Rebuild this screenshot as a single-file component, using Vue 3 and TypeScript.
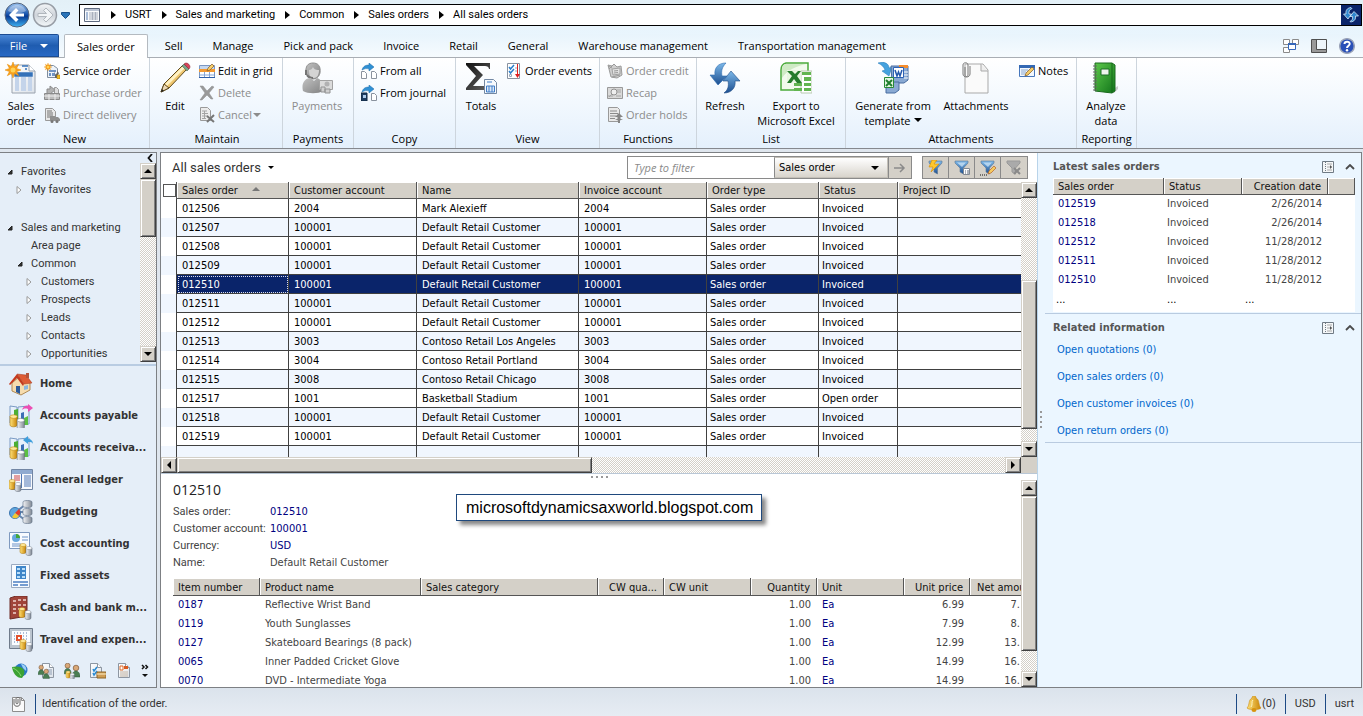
<script setup lang="ts">
import { ref } from 'vue'

interface SmallAction { icon: string; label: string; off?: boolean; menu?: boolean }
interface LargeAction { icon: string; lines: string[]; width: string; off?: boolean; menu?: boolean }
interface RibbonGroup { name: string; cls: string; large: LargeAction[]; small: SmallAction[] }

const crumbs = ['USRT', 'Sales and marketing', 'Common', 'Sales orders', 'All sales orders']
const tabs = ['Sell', 'Manage', 'Pick and pack', 'Invoice', 'Retail', 'General', 'Warehouse management', 'Transportation management']

const groups: RibbonGroup[] = [
  { name: 'New', cls: 'g-new', large: [{ icon: 'neworder', lines: ['Sales', 'order'], width: 'w42' }],
    small: [{ icon: 'service', label: 'Service order' }, { icon: 'purchase', label: 'Purchase order', off: true }, { icon: 'delivery', label: 'Direct delivery', off: true }] },
  { name: 'Maintain', cls: 'g-maintain', large: [{ icon: 'pencil', lines: ['Edit'], width: 'w46' }],
    small: [{ icon: 'editgrid', label: 'Edit in grid' }, { icon: 'delete', label: 'Delete', off: true }, { icon: 'cancel', label: 'Cancel', off: true, menu: true }] },
  { name: 'Payments', cls: 'g-payments', large: [{ icon: 'payments', lines: ['Payments'], width: 'w68', off: true }], small: [] },
  { name: 'Copy', cls: 'g-copy', large: [], small: [{ icon: 'fromall', label: 'From all' }, { icon: 'fromjournal', label: 'From journal' }] },
  { name: 'View', cls: 'g-view', large: [{ icon: 'totals', lines: ['Totals'], width: 'w46' }], small: [{ icon: 'events', label: 'Order events' }] },
  { name: 'Functions', cls: 'g-functions', large: [],
    small: [{ icon: 'credit', label: 'Order credit', off: true }, { icon: 'recap', label: 'Recap', off: true }, { icon: 'holds', label: 'Order holds', off: true }] },
  { name: 'List', cls: 'g-list', large: [{ icon: 'refresh', lines: ['Refresh'], width: 'w56' }, { icon: 'excel', lines: ['Export to', 'Microsoft Excel'], width: 'w86' }], small: [] },
  { name: 'Attachments', cls: 'g-attach', large: [{ icon: 'generate', lines: ['Generate from', 'template'], width: 'w94', menu: true }, { icon: 'attachment', lines: ['Attachments'], width: 'w72' }],
    small: [{ icon: 'notes', label: 'Notes' }] },
  { name: 'Reporting', cls: 'g-report', large: [{ icon: 'book', lines: ['Analyze', 'data'], width: 'w58' }], small: [] },
]

const tree = [
  { label: 'Favorites', level: 0, mark: 'open' },
  { label: 'My favorites', level: 1, mark: 'closed' },
  { label: 'Sales and marketing', level: 0, mark: 'open', gap: true },
  { label: 'Area page', level: 1, mark: '' },
  { label: 'Common', level: 1, mark: 'open' },
  { label: 'Customers', level: 2, mark: 'closed' },
  { label: 'Prospects', level: 2, mark: 'closed' },
  { label: 'Leads', level: 2, mark: 'closed' },
  { label: 'Contacts', level: 2, mark: 'closed' },
  { label: 'Opportunities', level: 2, mark: 'closed' },
]

const modules = [
  { icon: 'home', label: 'Home' },
  { icon: 'payable', label: 'Accounts payable' },
  { icon: 'receivable', label: 'Accounts receiva...' },
  { icon: 'ledger', label: 'General ledger' },
  { icon: 'budget', label: 'Budgeting' },
  { icon: 'cost', label: 'Cost accounting' },
  { icon: 'assets', label: 'Fixed assets' },
  { icon: 'bank', label: 'Cash and bank m...' },
  { icon: 'travel', label: 'Travel and expen...' },
]
const shortcuts = ['globe', 'peoplepage', 'peoplecoins', 'checkbox', 'cardpage']

const headers = ['Customer account', 'Name', 'Invoice account', 'Order type', 'Status', 'Project ID']
const drc = 'Default Retail Customer'
const orders = ([
  ['012506', '2004', 'Mark Alexieff'], ['012507', '100001', drc], ['012508', '100001', drc], ['012509', '100001', drc],
  ['012510', '100001', drc], ['012511', '100001', drc], ['012512', '100001', drc], ['012513', '3003', 'Contoso Retail Los Angeles'],
  ['012514', '3004', 'Contoso Retail Portland'], ['012515', '3008', 'Contoso Retail Chicago'], ['012517', '1001', 'Basketball Stadium'],
  ['012518', '100001', drc], ['012519', '100001', drc],
] as string[][]).map(([id, account, name]) => ({ id, account, name, status: id === '012517' ? 'Open order' : 'Invoiced' }))
const selected = ref('012510')

const lines = [
  ['0187', 'Reflective Wrist Band', '6.99', '7.'],
  ['0119', 'Youth Sunglasses', '7.99', '8.'],
  ['0127', 'Skateboard Bearings (8 pack)', '12.99', '13.'],
  ['0065', 'Inner Padded Cricket Glove', '14.99', '16.'],
  ['0070', 'DVD - Intermediate Yoga', '14.99', '16.'],
]
const latest = [
  ['012519', '2/26/2014'], ['012518', '2/26/2014'], ['012512', '11/28/2012'], ['012511', '11/28/2012'], ['012510', '11/28/2012'],
]
const related = ['Open quotations (0)', 'Open sales orders (0)', 'Open customer invoices (0)', 'Open return orders (0)']
const filterText = ref('')
const filterIcons = ['funnelbolt', 'funnelgrid', 'funneledit', 'funnelclear']
</script>

<template>
  <div class="app">
    <svg class="defs" aria-hidden="true">
      <defs>
        <linearGradient id="orb" x1="0" y1="0" x2="0" y2="1"><stop offset="0" stop-color="#9cc4f0" /><stop offset=".45" stop-color="#1c58b0" /><stop offset=".55" stop-color="#073a94" /><stop offset="1" stop-color="#3fb4f4" /></linearGradient>
        <linearGradient id="orbg" x1="0" y1="0" x2="0" y2="1"><stop offset="0" stop-color="#f4f6f8" /><stop offset=".5" stop-color="#cfd4da" /><stop offset="1" stop-color="#f4f8fa" /></linearGradient>
        <linearGradient id="blue" x1="0" y1="0" x2="0" y2="1"><stop offset="0" stop-color="#7db9ea" /><stop offset="1" stop-color="#1b4e90" /></linearGradient>
        <linearGradient id="page" x1="0" y1="0" x2="1" y2="1"><stop offset="0" stop-color="#fff" /><stop offset="1" stop-color="#dde3ea" /></linearGradient>
        <linearGradient id="gold" x1="0" y1="0" x2="1" y2="0"><stop offset="0" stop-color="#ffe27a" /><stop offset="1" stop-color="#c98405" /></linearGradient>
        <linearGradient id="silver" x1="0" y1="0" x2="1" y2="0"><stop offset="0" stop-color="#f4f5f7" /><stop offset="1" stop-color="#7f8894" /></linearGradient>
        <linearGradient id="green" x1="0" y1="0" x2="1" y2="1"><stop offset="0" stop-color="#5cc84a" /><stop offset="1" stop-color="#11741a" /></linearGradient>
        <linearGradient id="grey" x1="0" y1="0" x2="1" y2="1"><stop offset="0" stop-color="#bdbdbd" /><stop offset="1" stop-color="#757575" /></linearGradient>
        <linearGradient id="dark" x1="0" y1="0" x2="1" y2="1"><stop offset="0" stop-color="#111" /><stop offset="1" stop-color="#666" /></linearGradient>
        <g id="star"><path d="M8 0l1.600 4.400L13.700 2.300 11.600 6.400 16 8l-4.400 1.600 2.100 4.100-4.100-2.100L8 16l-1.600-4.400-4.100 2.100 2.100-4.100L0 8l4.400-1.600-2.100-4.100 4.100 2.100z" fill="#f9a11b" stroke="#e58a06" stroke-width=".5" /><circle cx="8" cy="8" r="2.500" fill="#ffd257" /></g>
        <g id="coins"><path d="M0 3v7c0 2 6 2 6 0V3z" fill="url(#gold)" stroke="#a8750a" stroke-width=".5" /><ellipse cx="3" cy="3" rx="3" ry="1.500" fill="#ffe99a" stroke="#b98512" stroke-width=".5" /><path d="M6 6v6c0 2 6 2 6 0V6z" fill="url(#silver)" stroke="#626b78" stroke-width=".5" /><ellipse cx="9" cy="6" rx="3" ry="1.500" fill="#fff" stroke="#7b8490" stroke-width=".5" /></g>
        <g id="sheet"><path d="M.5.500h7l4 4v10h-11z" fill="url(#page)" stroke="#8d96a2" /><path d="M7.500.500v4h4" fill="#fff" stroke="#8d96a2" /></g>
        <g id="funnel"><path d="M1 1h13v2L9.500 8v6l-3.500-2V8L1 3z" fill="url(#blue)" stroke="#5c7690" stroke-width=".6" /><path d="M3 2.500h9L8 7z" fill="#d4eaf9" opacity=".7" /></g>
        <g id="person"><circle cx="4" cy="3" r="2.800" fill="#d9a878" stroke="#6c4526" stroke-width=".6" /><path d="M0 12c0-8 8-8 8 0z" fill="#4a7e53" stroke="#2c5435" stroke-width=".5" /></g>
        <g id="chart"><path d="M1 2l7 1v17l-7-1zM9 3l11-1v18l-11 1z" fill="#e8f1fb" stroke="#7b9bc4" /><path d="M12 9l3-1v8h-3z" fill="#3c6fb5" /><path d="M5 6l4-1v11H5z" fill="#4cae35" /><path d="M15 14l4-2v9h-4z" fill="#5cc043" /></g>
      </defs>

      <symbol id="neworder" viewBox="0 0 32 32"><path d="M7 3h17l6 6v22H7z" fill="url(#page)" stroke="#9aa2ad" /><path d="M24 3v6h6" fill="#fff" stroke="#9aa2ad" /><path d="M17 4h6M20 7h2M10 11h17v3H10z" stroke="#3572b9" fill="#3572b9" stroke-width="1.500" /><path d="M10 15h4v14h-4zM16 15h5v14h-5zM23 15h4v14h-4z" fill="#c4d4ea" /><use href="#star" /></symbol>
      <symbol id="service" viewBox="0 0 16 16"><path d="M3.500 2.500h6l4 3v9h-10z" fill="#edf3fa" stroke="#808d9d" /><path d="M5 7h7v2H5zM5 10h2v3H5zM8 10h3v3H8z" fill="#6f94c4" /><use href="#star" transform="scale(.5)" /><path d="M10 8v2l1.500 1.500L13 10V8l2 2-1 2v3h-3v-3z" fill="#666" /><path d="M13 12h3v4h-3z" fill="#f3bd21" stroke="#a57709" stroke-width=".5" /></symbol>
      <symbol id="purchase" viewBox="0 0 16 16"><path d="M3 9V4h3V1l5 4-5 4z" fill="#b2b2b2" stroke="#8b8b8b" /><path d="M10.500 2.500h2l2 2v5h-4z" fill="#ddd" stroke="#999" /><path d="M.500 8.500h15v6H.5z" fill="#bcbcbc" stroke="#8a8a8a" /><path d="M0 11h16M5 9v6M11 9v6" stroke="#eee" /></symbol>
      <symbol id="delivery" viewBox="0 0 16 16"><path d="M1.500 1.500h7l3 3v9h-10z" fill="#e8e8e8" stroke="#999" /><path d="M3 4h5M3 6h6M3 8h6M3 10h4" stroke="#999" stroke-width="1.400" /><path d="M6 9h5v5H6zM11 10h3l2 2v2h-5z" fill="#909090" /><circle cx="8" cy="14.500" r="1.500" fill="#777" /><circle cx="13" cy="14.500" r="1.500" fill="#777" /></symbol>
      <symbol id="pencil" viewBox="0 0 32 32"><path d="M2 30l3-8L24 3l4 4L10 26z" fill="#efc66e" stroke="#5f4a1d" /><path d="M6 22L24 4l2 2L8 24z" fill="#fff2c4" /><path d="M2 30l3-8 5 4z" fill="#edd9b5" stroke="#5f4a1d" /><path d="M2 30l1-3 2 2z" fill="#222" /><path d="M23 4l2-2 5 5-2 2z" fill="#79a188" stroke="#49624f" stroke-width=".6" /><path d="M25 2c3-3 8 2 5 5z" fill="#d9455a" stroke="#8a2332" stroke-width=".6" /></symbol>
      <symbol id="editgrid" viewBox="0 0 16 16"><path d="M.5 2.500h15v12H.5z" fill="#fff" stroke="#7b97c2" /><path d="M1 3h14v3H1z" fill="#c5d7ef" /><path d="M0 6h16v3H0z" fill="#f39a32" /><path d="M1 12h14M5.500 9v5M10.500 9v5" stroke="#86a6d6" /><path d="M8 8l1-3 4-4 2 2-4 4z" fill="#f6cf6a" stroke="#80562a" stroke-width=".7" /><path d="M0 14.500h16" stroke="#2e5ea8" /></symbol>
      <symbol id="delete" viewBox="0 0 16 16"><path d="M1 1h3l4 5 5-5 2 1-5 6 4 6h-2L8 10l-5 5H1l5-7z" fill="#9a9a9a" stroke="#8c8c8c" stroke-width=".5" /></symbol>
      <symbol id="cancel" viewBox="0 0 16 16"><path d="M1.500.500h7l3 3v10h-10z" fill="#ececec" stroke="#9a9a9a" /><path d="M3 4h5M3 6.500h6M3 9h6M3 11.500h4M5.500 4v8" stroke="#a3a3a3" /><path d="M8 9l7 6M15 8l-7 7" stroke="#777" stroke-width="2" /></symbol>
      <symbol id="payments" viewBox="0 0 32 32"><path d="M5 12C4 4 7 1 12 1s8 3 7 10c-1 4-4 6-7 6s-5-2-6-5z" fill="url(#grey)" stroke="#858585" /><path d="M8 8c0 5 1 8 5 8 3 0 5-3 5-8-4 0-5-1-6-3-1 2-2 3-4 3z" fill="#d0d0d0" /><path d="M5 8v5M6 13c1 2 3 3 6 3" stroke="#666" stroke-width="2" fill="none" /><path d="M2 29c-2-8 2-13 8-13l3 3 3-3c4 1 7 6 6 13-5 3-15 3-20 0z" fill="url(#grey)" /><path d="M18.500 18.500h13v9h-13z" fill="#d8d8d8" stroke="#999" /><circle cx="26" cy="22" r="2.500" fill="#aaa" /><path d="M20 25h4v5h-4zM24 27h5v4h-5z" fill="#ccc" stroke="#888" /></symbol>
      <symbol id="fromall" viewBox="0 0 16 16"><path d="M.500 8.500h3l2 2v5h-5zM10.500 8.500h3l2 2v5h-5z" fill="#fff" stroke="#8a929e" /><path d="M1 7c1-4 4-5 7-5V0l5 4-5 4V6C5 5 3 6 1 7z" fill="#2f90d4" stroke="#1c69a5" stroke-width=".5" /></symbol>
      <symbol id="fromjournal" viewBox="0 0 16 16"><path d="M0 8h6v8H0z" fill="#1f3e63" stroke="#112640" /><path d="M2 10h3v3H2z" fill="#aecbea" /><path d="M10.500 8.500h3l2 2v5h-5z" fill="#fff" stroke="#8a929e" /><path d="M1 7c1-4 4-5 7-5V0l5 4-5 4V6C5 5 3 6 1 7z" fill="#2f90d4" stroke="#1c69a5" stroke-width=".5" /></symbol>
      <symbol id="totals" viewBox="0 0 32 32"><path d="M1 1h24v6h-1c0-2-2-3-4-3H9l9 9-10 11h12c2 0 4-1 5-3v7H1v-2l10-12L1 3z" fill="url(#dark)" /><path d="M19.500 17.500h9l3 3v11h-12z" fill="#f7fafd" stroke="#7388a3" /><path d="M22 20h5M21.500 24h8v6h-8zM24 24v6M27 24v6" stroke="#3e7cc8" fill="#dbe8f7" /></symbol>
      <symbol id="events" viewBox="0 0 16 16"><path d="M1.500.500h12v15h-12z" fill="#fff" stroke="#8892a0" /><path d="M3 4l1.500 2L8 2M3 8l1.500 2L8 6" stroke="#2a7fcc" stroke-width="1.500" fill="none" /><path d="M3.500 11.500h2v2h-2zM9 5h3M9 8h3" fill="none" stroke="#97a7bb" /><path d="M11 1h1v10h2l-2.500 4L9 11h2z" fill="#e02020" /></symbol>
      <symbol id="credit" viewBox="0 0 16 16"><path d="M1 2l4 1 2-2 3 3 4-1 1 9-5 3-6-1z" fill="#cfcfcf" stroke="#9b9b9b" /><path d="M1 3l4 2M2 6l5-5M5 14l8-2" stroke="#999" /><path d="M5 6l8-1v6l-7 1z" fill="#e2e2e2" stroke="#a1a1a1" /><path d="M7 8l4-.500M7 10l4-.500" stroke="#999" /></symbol>
      <symbol id="recap" viewBox="0 0 16 16"><path d="M.500 2.500h15v11H.5z" fill="#d9d9d9" stroke="#999" /><circle cx="7" cy="7" r="3" fill="#eee" stroke="#919191" /><path d="M5 9l-3 3M10 5h4M10 7h4M1 11h5M9 11h5" stroke="#a5a5a5" /></symbol>
      <symbol id="holds" viewBox="0 0 16 16"><path d="M1.500.500h9l2 2v12h-11z" fill="#e9e9e9" stroke="#999" /><path d="M3 4h7M3 6.500h8M3 9h6M3 11.500h5" stroke="#8b8b8b" /><path d="M12 6l4 4h-2.500v2H16l-3 1.500V16h-2v-2.500L8 12h2.500v-2H8z" fill="#868686" /></symbol>
      <symbol id="refresh" viewBox="0 0 32 32"><path d="M17 1C9 1 5 6 6 13H1l8 10 9-9h-5C12 9 13 5 17 1z" fill="url(#blue)" stroke="#2c6cb0" stroke-width=".6" /><path d="M15 31c8 0 12-6 11-12h5L22 9l-8 10h5c1 5 0 9-4 12z" fill="url(#blue)" stroke="#1d4a84" stroke-width=".6" /></symbol>
      <symbol id="excel" viewBox="0 0 32 32"><path d="M6 1h22v27H1V8c0-4 1-6 5-7z" fill="#f2faed" stroke="#4bab3b" stroke-width="1.500" /><path d="M2 9c0-5 1-7 4-7h20C17 4 7 8 2 16z" fill="#cfeac5" /><path d="M21 9h11v22H21z" fill="#fff" stroke="#b8c9b0" /><path d="M22 10h9v3h-9zM24 15h7v4h-7zM24 21h7v3h-7zM24 26h7v3h-7zM14 21h8v3h-8zM14 26h8v3h-8z" fill="#62b550" /><path d="M7 8h14v12H7z" fill="#e8f6e0" /><path d="M7 9h5l3 3 3-3h3l-4 5 5 7h-5l-3-4-3 4H7l5-7z" fill="#247c2b" /></symbol>
      <symbol id="generate" viewBox="0 0 32 32"><path d="M1 1c7-2 11 1 11 5l3-1-3 9-7-5 3-1C7 5 5 3 1 1z" fill="#45a2de" stroke="#2279b8" stroke-width=".5" /><path d="M14 4h17v14l-4 3H15z" fill="#89a9d3" stroke="#496da0" /><path d="M22 3h9v3h-9z" fill="#f58d2c" /><path d="M27 10h4M27 13h4M27 16h4" stroke="#fff" /><path d="M16.500 5.500h10v10h-10z" fill="#fff" stroke="#2e62b4" /><path d="M18 8l2 6 1.500-4 1.500 4 2-6" stroke="#2458ac" stroke-width="1.500" fill="none" /><path d="M9 20h13v8l-4 3H9z" fill="#89a9d3" stroke="#496da0" /><path d="M7.500 15.500h9v10h-9z" fill="#e5f5e1" stroke="#278936" /><path d="M9 18l6 6M15 18l-6 6" stroke="#1f7f2e" stroke-width="2" /></symbol>
      <symbol id="attachment" viewBox="0 0 32 32"><path d="M5 2h18l5 6v23H5z" fill="#fafafa" stroke="#a9a9a9" /><path d="M21 2v7h7" fill="#eee" stroke="#a9a9a9" /><path d="M5 5v8c0 2 3 2 3 0V3c0-3-5-3-5 0v9c0 4 7 4 7 0V4" fill="none" stroke="#777" /></symbol>
      <symbol id="notes" viewBox="0 0 16 16"><path d="M.500 2.500h15v11H.5z" fill="#f2f7fd" stroke="#4777bc" /><path d="M0 2h16v3H0z" fill="#3368b4" /><path d="M2 7h7M2 9h5M2 11h4" stroke="#8aa8d0" /><path d="M6 13l1-3 6-6 2 2-6 6z" fill="#f5cb65" stroke="#7b5828" stroke-width=".7" /></symbol>
      <symbol id="book" viewBox="0 0 32 32"><path d="M20 29l8-5v3l-4 4z" fill="#aaa" opacity=".6" /><path d="M5 1h17l3 2v26l-3 2L5 29z" fill="url(#green)" stroke="#1b6b1f" /><path d="M22 1v30" stroke="#186a1c" /><path d="M11 7h8v6h-8z" fill="#eef4ec" stroke="#1c6e25" /><path d="M3 4h4M3 7h4M3 10h4M3 13h4M3 16h4M3 19h4M3 22h4M3 25h4M3 28h4" stroke="#666" /></symbol>

      <symbol id="windows" viewBox="0 0 16 16"><path d="M.500 1.500h6v5h-6zM9.500 1.500h6v5h-6zM.500 9.500h6v5h-6z" fill="#fff" stroke="#8a8a8a" /><path d="M5.500 5.500h7v6h-7z" fill="#fff" stroke="#3567ba" /><path d="M5 5h8v2H5z" fill="#3567ba" /></symbol>
      <symbol id="layout" viewBox="0 0 16 16"><path d="M.500 1.500h15v13H.5z" fill="#eef5fa" stroke="#4f4f4f" /><path d="M1 2h4v12H1zM5 11h10v3H5z" fill="#999" /><path d="M5.500 2v9.500H15" fill="none" stroke="#4f4f4f" /></symbol>
      <symbol id="help" viewBox="0 0 16 16"><circle cx="8" cy="8" r="7.300" fill="#2950b8" stroke="#9aa3b8" stroke-width="1.500" /><path d="M5.500 6C5.500 3 11 3 10.700 6 10.500 8 8 8 8 10" stroke="#fff" stroke-width="2" fill="none" /><circle cx="8" cy="12.300" r="1.200" fill="#fff" /></symbol>
      <symbol id="listpage" viewBox="0 0 16 16"><path d="M.500 1.500h15v13H.5z" fill="#f8fafc" stroke="#5f6b80" /><path d="M1 2h14v2H1z" fill="#bcc5d4" /><path d="M2 6h2M2 8h2M2 10h2M2 12h2" stroke="#5c80b4" /><path d="M5 6h9M5 8h9M5 10h9M5 12h9M8.500 5v8M11.500 5v8" stroke="#a9b0bd" /></symbol>

      <symbol id="home" viewBox="0 0 24 24"><path d="M3 11l7-6 11 4v9l-9 5-9-4z" fill="#f6dcae" stroke="#b08a54" /><path d="M0 12l8-10 7 10-1 2-6-8-7 7z" fill="#c53a1e" /><path d="M8 2l9 1 6 8-8 1z" fill="#df5c35" stroke="#a1371d" stroke-width=".5" /><path d="M17 1h3v5h-3z" fill="#b4543a" /><path d="M7 14h4v8l-4-2z" fill="#2d5a98" /><path d="M15 14l4-1v4l-4 1z" fill="#8bb6df" /></symbol>
      <symbol id="payable" viewBox="0 0 24 24"><use href="#chart" /><path d="M13 6c1-4 4-5 6-4V0l5 4-5 4V5c-3-1-5 0-6 1z" fill="#ec4fb4" /><use href="#coins" transform="translate(1 9) scale(1.200)" /></symbol>
      <symbol id="receivable" viewBox="0 0 24 24"><use href="#chart" /><path d="M24 8c0-3-2-5-5-5V0l-5 4 5 4V6c3 0 4 0 5 2z" fill="#3f9fdc" /><use href="#coins" transform="translate(1 9) scale(1.200)" /></symbol>
      <symbol id="ledger" viewBox="0 0 24 24"><path d="M2.500 1.500h21v20h-21z" fill="#f7f9fc" stroke="#7286a4" /><path d="M3 2h20v4H3z" fill="#8faad0" /><path d="M5 8h6M5 10h6M5 12h6" stroke="#d04545" /><path d="M15 8h7M15 10h7M15 12h7M15 14h7M15 16h7M15 18h7M12.500 6v14" stroke="#4f77b5" /><use href="#coins" transform="translate(0 10)" /></symbol>
      <symbol id="budget" viewBox="0 0 24 24"><path d="M8 11l8-6M8 12h8M8 14l8 6" stroke="#6684ab" stroke-width="2" /><circle cx="6" cy="13" r="5.500" fill="#5fa6de" stroke="#3b75ae" /><path d="M6 13l4-4c2 3 1 5 0 7z" fill="#e33e2b" /><path d="M6 13l4 3c-2 3-5 3-7 1z" fill="#f3c833" /><g fill="url(#silver)" stroke="#69788e" stroke-width=".7"><path d="M14 2v4c0 2 9 2 9 0V2c0-2-9-2-9 0zM14 10v4c0 2 9 2 9 0v-4c0-2-9-2-9 0zM14 18v4c0 2 9 2 9 0v-4c0-2-9-2-9 0z" /></g></symbol>
      <symbol id="cost" viewBox="0 0 24 24"><path d="M.500.500h20v16H.5z" fill="#f8fbff" stroke="#7e99bf" /><circle cx="7" cy="6" r="4" fill="#66a7dd" /><path d="M7 6V2c3 0 4 2 4 4z" fill="#42a636" /><path d="M13 5h6M13 8h6M3 12h9M3 14h9" stroke="#6d93c7" /><use href="#coins" transform="translate(11 10)" /></symbol>
      <symbol id="assets" viewBox="0 0 24 24"><path d="M2.500.500h18v23h-18z" fill="#f8fbff" stroke="#9aaac1" /><path d="M7 2h10v13H7z" fill="#3f86c9" /><path d="M8 4h3v2H8zM13 4h3v2h-3zM8 8h3v2H8zM13 8h3v2h-3zM8 12h3v2H8zM13 12h3v2h-3z" fill="#b9defa" /><path d="M4 18h15M4 21h5M11 21h8" stroke="#4b7fc2" stroke-width="1.500" /></symbol>
      <symbol id="bank" viewBox="0 0 24 24"><path d="M1 2l6-2h11v20l-17 3z" fill="#a0443a" stroke="#6f2c26" /><path d="M4 4h3v2H4zM9 3h3v2H9zM14 3h3v2h-3zM4 8h3v2H4zM9 8h3v2H9zM14 8h3v2h-3zM4 12h3v2H4zM9 12h3v2H9zM4 16h3v2H4z" fill="#dcb1aa" /><use href="#coins" transform="translate(10 10)" /></symbol>
      <symbol id="travel" viewBox="0 0 24 24"><path d="M.500.500h23v20H.5z" fill="#bcc5cf" stroke="#6f7b8b" /><path d="M3 3h18v14H3z" fill="#fafcff" /><path d="M5 5h15M5 8h15M5 11h15M5 14h8" stroke="#5f7fae" stroke-dasharray="1 2" /><path d="M8 8h4v4H8z" fill="none" stroke="#e2532f" stroke-width="2" /><use href="#coins" transform="translate(11 10)" /></symbol>

      <symbol id="globe" viewBox="0 0 16 16"><circle cx="9" cy="7" r="6.500" fill="#2b77c9" /><path d="M9 1c4 0 6 4 5 7l-3-3z" fill="#9cd0f4" /><path d="M0 4c4-1 10-1 12 3 1 3 0 5-2 8C4 15 1 10 0 4z" fill="#3ba234" /><path d="M1 5c4 2 6 4 8 8" stroke="#8bdc72" fill="none" /></symbol>
      <symbol id="peoplepage" viewBox="0 0 16 16"><use href="#sheet" transform="translate(4 0)" /><path d="M8 7h6M8 9h6M8 11h6" stroke="#8b9bb1" /><use href="#person" transform="translate(0 2) scale(.8)" /><use href="#person" transform="translate(5 6) scale(.8)" /></symbol>
      <symbol id="peoplecoins" viewBox="0 0 16 16"><use href="#person" transform="scale(.9)" /><use href="#person" transform="translate(8 2)" /><use href="#coins" transform="translate(2 7) scale(.7)" /></symbol>
      <symbol id="checkbox" viewBox="0 0 16 16"><use href="#sheet" /><path d="M3 6l1 2 3-4M3 10l1 2 3-4" stroke="#2a8bd4" fill="none" stroke-width="1.500" /><path d="M7 9h9v6H7z" fill="#cf9d55" stroke="#8e6427" /><path d="M7 11h9" stroke="#fff0c7" /></symbol>
      <symbol id="cardpage" viewBox="0 0 16 16"><use href="#sheet" transform="translate(2 0)" /><path d="M4 3h3v4H4z" fill="#fff" stroke="#df6a2b" /><path d="M8 3h4v3H8z" fill="#d85a20" /><path d="M4 9h8M4 11h8M4 13h8" stroke="#c8b7a4" /></symbol>

      <symbol id="funnelbolt" viewBox="0 0 16 16"><use href="#funnel" /><path d="M4 0h5L6 4h5l-8 8 2-5H1z" fill="#ffc72d" stroke="#d48a00" stroke-width=".6" /></symbol>
      <symbol id="funnelgrid" viewBox="0 0 16 16"><use href="#funnel" /><path d="M9.500 8.500h6v6h-6z" fill="#fff" stroke="#818993" /><path d="M11 11h1M13 11h2M11 13h1M13 13h2" stroke="#5b6776" /></symbol>
      <symbol id="funneledit" viewBox="0 0 16 16"><use href="#funnel" /><path d="M8 14l1-3 5-5 2 2-5 5z" fill="#f5ca60" stroke="#b3602a" stroke-width=".7" /><path d="M0 15h8" stroke="#111" stroke-dasharray="1 1" /></symbol>
      <symbol id="funnelclear" viewBox="0 0 16 16"><path d="M1 1h13v2L9.500 8v6L6 12V8L1 3z" fill="#aaa" stroke="#999" /><path d="M8 8l6 6M14 8l-6 6" stroke="#8a8a8a" stroke-width="2" /></symbol>
      <symbol id="bell" viewBox="0 0 16 16"><path d="M1 12c3-3 1-8 5-10 0-3 4-3 4 0 4 2 2 7 5 10-1 2-13 2-14 0z" fill="url(#gold)" stroke="#c78a10" stroke-width=".6" /><ellipse cx="8" cy="14" rx="2.500" ry="2" fill="#d8930d" /><path d="M5 11c2-2 0-6 2-7" stroke="#fff6c4" fill="none" /></symbol>
      <symbol id="clip" viewBox="0 0 16 16"><path d="M2.500 1.500h9l3 3v11h-12z" fill="#fafafa" stroke="#8d8d8d" /><path d="M11.500 1.500v3h3" fill="none" stroke="#8d8d8d" /><path d="M4 3v5c0 3 6 3 6 0V3c0-2-4-2-4 0v4c0 1 2 1 2 0V3" fill="none" stroke="#666" /></symbol>
      <symbol id="card" viewBox="0 0 12 12"><path d="M.500.500h11v11H.5z" fill="#f5f7f8" stroke="#707b85" /><path d="M3.500 1v10" stroke="#707b85" stroke-dasharray="1 1" /><path d="M5 3h5M5 6h5M5 9h5" stroke="#aaa" /><path d="M8 4l2 2-2 2z" fill="#555" /></symbol>
    </svg>

    <header class="address">
      <button class="orb" aria-label="Back"><svg viewBox="0 0 26 26"><circle cx="13" cy="13" r="12" fill="url(#orb)" stroke="#56657c" /><path d="M4 9c3-8 15-8 18 0-6 3-12 3-18 0z" fill="#fff" opacity=".35" /><path d="M12 6l2.500 2.500-3 3H20v3h-8.500l3 3L12 20l-7-7z" fill="#fff" /></svg></button>
      <button class="orb" aria-label="Forward"><svg viewBox="0 0 26 26"><circle cx="13" cy="13" r="11.500" fill="url(#orbg)" stroke="#979da5" stroke-width="1.500" /><path d="M14 6l-2.500 2.500 3 3H6v3h8.500l-3 3L14 20l7-7z" fill="#f2f5f7" stroke="#b1b7bd" /></svg></button>
      <button class="recent" aria-label="Recent pages"><svg viewBox="0 0 9 7"><path d="M.500.500h8v2l-4 4-4-4z" fill="#2a74b8" stroke="#19518a" /></svg></button>
      <nav class="crumbs" aria-label="Address">
        <svg class="i18"><use href="#listpage" /></svg>
        <template v-for="c in crumbs" :key="c"><i class="sep"></i><a href="#">{{ c }}</a></template>
        <button class="go" aria-label="Reload"><svg viewBox="0 0 32 32" class="i18"><path d="M16 1C8 2 5 7 6 14H1l9 10 7-10h-5C11 9 13 5 18 3zM15 30c8-1 11-6 10-12h6l-9-9-8 10h5c1 5-1 8-5 10z" fill="#2f86cf" stroke="#e0f0ff" stroke-width="1.500" /></svg></button>
      </nav>
    </header>

    <div class="tabs">
      <button class="file">File<i class="down white"></i></button>
      <button class="tab current">Sales order</button>
      <button v-for="t in tabs" :key="t" class="tab">{{ t }}</button>
      <span class="tools">
        <button v-for="t in ['windows', 'layout', 'help']" :key="t" :aria-label="t"><svg class="i16"><use :href="'#' + t" /></svg></button>
      </span>
    </div>

    <div class="ribbon">
      <section v-for="g in groups" :key="g.name" class="group" :class="g.cls">
        <div class="actions">
          <button v-for="l in g.large" :key="l.icon" class="large" :class="[l.width, { off: l.off }]">
            <svg class="i32"><use :href="'#' + l.icon" /></svg>
            <span v-for="t in l.lines" :key="t">{{ t }}<i v-if="l.menu && t === 'template'" class="down"></i></span>
          </button>
          <div v-if="g.small.length" class="smalls">
            <button v-for="s in g.small" :key="s.icon" class="small" :class="{ off: s.off }">
              <svg class="i16"><use :href="'#' + s.icon" /></svg><span>{{ s.label }}</span><i v-if="s.menu" class="down"></i>
            </button>
          </div>
        </div>
        <h2>{{ g.name }}</h2>
      </section>
    </div>

    <div class="body">
      <aside class="side">
        <button class="collapse" aria-label="Collapse pane"><svg viewBox="0 0 6 8"><path d="M5 0L1.500 4 5 8" fill="none" stroke="#111" stroke-width="1.800" /></svg></button>
        <div class="treebox">
          <ul class="tree">
            <li v-for="n in tree" :key="n.label" :class="['lv' + n.level, { gap: n.gap }]">
              <svg viewBox="0 0 8 8" class="mark"><path v-if="n.mark === 'open'" d="M6 2v4H2z" fill="#333" stroke="#222" /><path v-if="n.mark === 'closed'" d="M1 .500L5 4 1 7.500z" fill="#fff" stroke="#999" /></svg>
              <a href="#">{{ n.label }}</a>
            </li>
          </ul>
          <div class="vbar"><button aria-label="Scroll up"><i class="up"></i></button><div class="thumb f-tree"></div><div class="track f-tree2"></div><button aria-label="Scroll down"><i class="dn"></i></button></div>
        </div>
        <div class="modules">
          <button v-for="m in modules" :key="m.label" class="module"><svg class="i24"><use :href="'#' + m.icon" /></svg>{{ m.label }}</button>
        </div>
        <div class="shortcuts">
          <button v-for="s in shortcuts" :key="s" :aria-label="s"><svg class="i16"><use :href="'#' + s" /></svg></button>
          <button aria-label="More" class="more"><svg viewBox="0 0 8 14"><path d="M1 1l2 2-2 2M4.500 1l2 2-2 2" fill="none" stroke="#111" stroke-width="1.500" /><path d="M1 10h6l-3 3z" fill="#111" /></svg></button>
        </div>
      </aside>

      <main class="main">
        <div class="center">
          <div class="filterbar">
            <h1>All sales orders<i class="down"></i></h1>
            <form class="filter" @submit.prevent>
              <input v-model="filterText" type="text" placeholder="Type to filter" aria-label="Filter">
              <span class="pick"><select aria-label="Filter field"><option>Sales order</option><option>Name</option></select><i class="down"></i></span>
              <button class="apply" aria-label="Apply filter"><svg viewBox="0 0 12 10"><path d="M0 5h10M6 1l4 4-4 4" fill="none" stroke="#8a8a8a" stroke-width="1.500" /></svg></button>
            </form>
            <div class="fbuttons"><button v-for="f in filterIcons" :key="f" :aria-label="f"><svg class="i16"><use :href="'#' + f" /></svg></button></div>
          </div>

          <div class="gridbox">
            <div class="gridview">
              <table class="grid">
                <colgroup><col class="c16"><col class="c112"><col class="c128"><col class="c162"><col class="c128"><col class="c112"><col class="c79"><col></colgroup>
                <thead><tr>
                  <th class="tick"><input type="checkbox" aria-label="Select all"></th>
                  <th>Sales order<i class="sorted"></i></th>
                  <th v-for="h in headers" :key="h">{{ h }}</th>
                </tr></thead>
                <tbody>
                  <tr v-for="o in orders" :key="o.id" :class="{ sel: o.id === selected }" @click="selected = o.id">
                    <td class="tick"></td><td class="first">{{ o.id }}</td><td>{{ o.account }}</td><td>{{ o.name }}</td><td>{{ o.account }}</td><td class="tight">Sales order</td><td class="tight">{{ o.status }}</td><td></td>
                  </tr>
                  <tr><td class="tick"></td><td v-for="n in 7" :key="n"></td></tr>
                </tbody>
              </table>
            </div>
            <div class="vbar"><button aria-label="Scroll up"><i class="up"></i></button><div class="track f83"></div><div class="thumb f148"></div><div class="track f12"></div><button aria-label="Scroll down"><i class="dn"></i></button></div>
          </div>
          <div class="hrow">
            <div class="hbar"><button aria-label="Scroll left"><i class="lf"></i></button><div class="thumb f-h1"></div><div class="track f-h1"></div><button aria-label="Scroll right"><i class="rt"></i></button></div>
            <div class="corner"></div>
          </div>
          <div class="splitter"></div>

          <div class="detail">
            <div class="preview">
              <h2>012510</h2>
              <dl>
                <dt>Sales order:</dt><dd><a href="#">012510</a></dd>
                <dt>Customer account:</dt><dd><a href="#">100001</a></dd>
                <dt>Currency:</dt><dd><a href="#">USD</a></dd>
                <dt>Name:</dt><dd>Default Retail Customer</dd>
              </dl>
              <table class="lines">
                <colgroup><col class="c87"><col class="c161"><col class="c177"><col class="c66"><col class="c87"><col class="c66"><col class="c87"><col class="c66"><col></colgroup>
                <thead><tr><th>Item number</th><th>Product name</th><th>Sales category</th><th class="n">CW qua...</th><th>CW unit</th><th class="n">Quantity</th><th>Unit</th><th class="n">Unit price</th><th class="net">Net amou</th></tr></thead>
                <tbody><tr v-for="l in lines" :key="l[0]"><td><a href="#">{{ l[0] }}</a></td><td>{{ l[1] }}</td><td></td><td></td><td></td><td class="n">1.00</td><td><a href="#">Ea</a></td><td class="n">{{ l[2] }}</td><td class="n amount">{{ l[3] }}</td></tr></tbody>
              </table>
              <div class="callout">microsoftdynamicsaxworld.blogspot.com</div>
            </div>
            <div class="vbar"><button aria-label="Scroll up"><i class="up"></i></button><div class="thumb f156"></div><div class="track f20"></div><button aria-label="Scroll down"><i class="dn"></i></button></div>
          </div>
        </div>

        <div class="vsplit"></div>
        <aside class="facts">
          <section>
            <header><h3>Latest sales orders</h3><svg class="i12"><use href="#card" /></svg><svg viewBox="0 0 10 6" class="chev"><path d="M1 5l4-4 4 4" fill="none" stroke="#4b4b4b" stroke-width="1.800" /></svg></header>
            <table class="latest">
              <colgroup><col class="c111"><col class="c78"><col class="c86"><col></colgroup>
              <thead><tr><th>Sales order</th><th>Status</th><th class="n">Creation date</th><th></th></tr></thead>
              <tbody>
                <tr v-for="r in latest" :key="r[0]"><td><a href="#">{{ r[0] }}</a></td><td class="state">Invoiced</td><td class="n">{{ r[1] }}</td><td></td></tr>
                <tr class="dots"><td>...</td><td>...</td><td>...</td><td></td></tr>
              </tbody>
            </table>
          </section>
          <section>
            <header><h3>Related information</h3><svg class="i12"><use href="#card" /></svg><svg viewBox="0 0 10 6" class="chev"><path d="M1 5l4-4 4 4" fill="none" stroke="#4b4b4b" stroke-width="1.800" /></svg></header>
            <a v-for="r in related" :key="r" href="#" class="rel">{{ r }}</a>
          </section>
        </aside>
      </main>
    </div>

    <footer class="status">
      <span class="cell"><svg class="i16"><use href="#clip" /></svg></span>
      <span class="msg">Identification of the order.</span>
      <span class="cell bell"><svg class="i16"><use href="#bell" /></svg>(0)</span>
      <span class="cell">USD</span>
      <span class="cell">usrt</span>
    </footer>
  </div>
</template>

<style>
body { margin: 0; }
</style>

<style scoped>
* { box-sizing: border-box; }
.app { --ui: "Open Sans", "Noto Sans", sans-serif; --pane: Roboto, "Noto Sans", sans-serif; --grid: "DejaVu Sans Condensed", "DejaVu Sans", sans-serif; --face: #d4d0c8;
  display: flex; flex-direction: column; height: 100vh; min-height: 716px; overflow: hidden; font: 11px/16px var(--ui); color: #000; background: #dfe6ee; }
button { font: inherit; color: inherit; background: none; border: 0; padding: 0; margin: 0; display: flex; align-items: center; justify-content: center; }
a { color: inherit; text-decoration: none; }
h1, h2, h3, ul, dl, dd { margin: 0; padding: 0; font-weight: normal; }
svg { display: block; flex: none; }
.defs { position: absolute; width: 0; height: 0; }
.i12 { width: 12px; height: 12px; }
.i16 { width: 16px; height: 16px; }
.i18 { width: 18px; height: 16px; }
.i24 { width: 24px; height: 24px; overflow: visible; }
.i32 { width: 32px; height: 32px; }
.down { display: inline-block; border: 4px solid transparent; border-top: 4px solid currentColor; border-bottom: 0; }
.white { color: #fff; }

.address { display: flex; align-items: center; height: 34px; padding: 0 1px 4px 3px; background: linear-gradient(#e3f0f7, #e9f5fd); flex: none; }
.orb { width: 28px; height: 28px; }
.orb svg { width: 26px; height: 26px; }
.recent { width: 12px; height: 20px; }
.recent svg { width: 9px; height: 7px; }
.crumbs { display: flex; align-items: center; flex: 1; height: 22px; margin-left: 8px; padding-left: 3px; border: 1px solid #000; background: #fff; font-family: var(--pane); }
.crumbs a { line-height: 20px; }
.sep { border: 4px solid transparent; border-left: 5px solid #000; border-right: 0; margin: 0 9px 0 10px; }
.go { width: 20px; height: 20px; margin-left: auto; background: #0a246a; }
.go svg { width: 16px; height: 16px; }

.tabs { display: flex; align-items: stretch; height: 24px; flex: none; border-bottom: 1px solid #a9aeb4; background: linear-gradient(#e8f4fc, #f6fbfe); }
.file { width: 59px; gap: 13px; color: #fff; background: linear-gradient(#4a87d6, #1f5cb0 50%, #2869c4); border: 1px solid #1c4c92; border-left: 0; border-radius: 0 2px 0 0; }
.tab { padding: 0 15px; border: 0; }
.tab.current { margin: 0 2px -1px 5px; padding: 0 12px; background: #fff; border: 1px solid #b4bac0; border-bottom: 0; border-radius: 2px 2px 0 0; }
.tools { display: flex; gap: 12px; margin-left: auto; margin-right: 8px; }

.ribbon { display: flex; flex: none; height: 91px; border-bottom: 1px solid #85888e; background: linear-gradient(#fff, #f2f8fe 50%, #e4f0fc); }
.group { display: flex; flex-direction: column; justify-content: space-between; border-right: 1px solid #cdd5dd; padding-bottom: 1px; }
.group h2 { text-align: center; font-size: 11px; line-height: 16px; }
.actions { display: flex; padding-top: 2px; }
.large { flex-direction: column; justify-content: flex-start; line-height: 15px; padding-top: 2px; }
.large .i32 { margin-bottom: 4px; }
.large span { white-space: nowrap; }
.large .down { margin: 0 0 3px 3px; }
.large.off .i32 { opacity: .9; }
.smalls { display: flex; flex-direction: column; align-items: flex-start; }
.small { height: 22px; gap: 3px; white-space: nowrap; }
.off { color: #8c8c8c; }
.small .down { margin-left: -2px; }
.g-new { width: 150px; } .g-new .smalls { margin-left: 2px; }
.g-maintain { width: 133px; padding-left: 2px; } .g-maintain .smalls { margin-left: 1px; }
.g-payments { width: 71px; }
.g-copy { width: 102px; } .g-copy .smalls { margin-left: 7px; }
.g-view { width: 144px; } .g-view .large { margin-left: 2px; } .g-view .smalls { margin-left: 2px; }
.g-functions { width: 97px; } .g-functions .smalls { margin-left: 7px; }
.g-list { width: 149px; }
.g-attach { width: 231px; } .g-attach .smalls { margin-left: 7px; }
.g-report { width: 60px; }
.w42 { width: 42px; } .w46 { width: 46px; } .w56 { width: 56px; } .w58 { width: 58px; } .w68 { width: 68px; } .w72 { width: 72px; } .w86 { width: 86px; } .w94 { width: 94px; }

.body { display: flex; flex: 1; min-height: 0; gap: 3px; padding-top: 3px; }
.side { width: 157px; flex: none; display: flex; flex-direction: column; border: 1px solid #7d8084; border-left: 0; background: #e5eef8; color: #333; }
.collapse { align-self: flex-end; width: 12px; height: 10px; }
.collapse svg { width: 6px; height: 8px; }
.treebox { display: flex; height: 199px; flex: none; }
.tree { flex: 1; list-style: none; font-family: var(--pane); }
.tree li { display: flex; align-items: center; height: 18px; gap: 7px; }
.tree .gap { margin-top: 20px; }
.tree .mark { width: 8px; height: 8px; }
.lv0 { padding-left: 6px; } .lv1 { padding-left: 16px; } .lv2 { padding-left: 26px; }

.modules { display: flex; flex-direction: column; margin-top: 2px; padding-top: 2px; border-top: 2px solid #b9cce2; }
.module { height: 32px; gap: 7px; padding-left: 9px; justify-content: flex-start; font: bold 11px/16px var(--grid); color: #333; white-space: nowrap; }
.shortcuts { display: flex; gap: 10px; padding: 7px 0 0 12px; }
.more { margin-left: -1px; }
.more svg { width: 8px; height: 14px; }

.vbar { width: 16px; flex: none; display: flex; flex-direction: column; }
.hbar { height: 16px; flex: 1; display: flex; }
.vbar button, .hbar button { width: 16px; height: 16px; flex: none; }
.vbar button, .hbar button, .thumb { background: var(--face); border: 1px solid; border-color: #d4d0c8 #404040 #404040 #d4d0c8; box-shadow: inset 1px 1px #fff, inset -1px -1px #808080; }
.track { background: repeating-conic-gradient(#fff 0 25%, #d4d0c8 0 50%) 0 0 / 2px 2px; }
.up, .dn, .lf, .rt { border: 4px solid transparent; }
.up { border-bottom-color: #000; border-top: 0; }
.dn { border-top-color: #000; border-bottom: 0; }
.lf { border-right-color: #000; border-left: 0; }
.rt { border-left-color: #000; border-right: 0; }
.f-tree { flex: 57; } .f-tree2 { flex: 110; }
.f83 { flex: 83; } .f148 { flex: 148; } .f12 { flex: 12; } .f156 { flex: 156; } .f20 { flex: 20; } .f-h1 { flex: 1; }
.corner { width: 16px; background: var(--face); }

.main { flex: 1; min-width: 0; display: flex; border: 1px solid #7d8084; background: #ebf6ff; margin-right: 1px; }
.center { flex: 1; min-width: 0; display: flex; flex-direction: column; background: #fff; }
.filterbar { display: flex; height: 29px; flex: none; align-items: center; padding-right: 9px; }
.filterbar h1 { font: 13px/20px var(--pane); color: #333; margin-left: 11px; margin-right: auto; }
.filterbar h1 .down { margin: 0 0 3px 7px; border-width: 3px; border-bottom: 0; color: #000; }
.filter { display: flex; height: 23px; border: 1px solid #8a8a8a; margin-right: 10px; }
.filter input { width: 146px; border: 0; padding: 0 6px; font: 11px var(--ui); outline: 0; }
.filter input::placeholder { font-style: italic; color: #8a8a8a; opacity: 1; }
.pick { display: flex; align-items: center; width: 114px; background: linear-gradient(#fff, #d8d4cc); border: 1px solid #c4c0b8; border-left: 1px solid #8a8a8a; }
.pick select { appearance: none; flex: 1; min-width: 0; align-self: stretch; border: 0; background: none; font: 11px var(--grid); padding: 0 4px; color: #000; }
.pick .down { margin-right: 8px; }
.apply { width: 23px; background: var(--face); border-left: 1px solid #8a8a8a; }
.apply svg { width: 12px; height: 10px; }
.fbuttons { display: flex; height: 23px; border: 1px solid #8a8a8a; background: var(--face); }
.fbuttons button { width: 26px; border-right: 1px solid #8a8a8a; }
.fbuttons button:last-child { border: 0; }

table { border-collapse: separate; border-spacing: 0; table-layout: fixed; font: 11px/16px var(--grid); }
th, td { padding: 0 5px; text-align: left; white-space: nowrap; overflow: hidden; font-weight: normal; }
th { height: 17px; padding-top: 2px; line-height: 14px; background: var(--face); border-right: 1px solid #555; border-bottom: 1px solid #555; box-shadow: inset 1px 1px #fff; color: #111; }
.c16 { width: 16px; } .c66 { width: 66px; } .c78 { width: 78px; } .c79 { width: 79px; } .c86 { width: 86px; } .c87 { width: 87px; } .c111 { width: 111px; } .c112 { width: 112px; } .c128 { width: 128px; } .c161 { width: 161px; } .c162 { width: 162px; } .c177 { width: 177px; }
.n { text-align: right; }
.gridbox { display: flex; height: 275px; flex: none; overflow: hidden; }
.gridview { flex: 1; min-width: 0; overflow: hidden; }
.grid { width: 100%; }
.grid td { height: 19px; padding: 2px 2px 0 5px; line-height: 16px; border-right: 1px solid #404040; border-bottom: 1px solid #404040; }
.grid .tight { padding-left: 3px; }
.grid tr > :last-child { border-right: 0; }
.grid tbody tr:nth-child(even) td { background: #f0f6fe; }
.grid .tick, .grid tbody tr .tick { background: #fff; border-bottom: 0; padding: 0; box-shadow: none; }
.grid .tick input { display: block; appearance: none; width: 13px; height: 13px; margin: 0 0 0 2px; border: 1px solid #555; background: #fff; }
.grid tbody tr.sel td:not(.tick) { background: #0a246a; color: #fff; }
.grid tbody tr.sel .first { outline: 1px dotted #d8dcec; outline-offset: -2px; }
.sorted { display: inline-block; border: 4px solid transparent; border-bottom: 4px solid #777; border-top: 0; margin: 0 0 3px 14px; }
.hrow { display: flex; height: 16px; flex: none; }
.splitter { height: 7px; flex: none; border-top: 1px solid #b9c7d6; background: repeating-linear-gradient(90deg, #999 0 2px, #fff 2px 5px) center / 17px 2px no-repeat, #fff; }

.detail { flex: 1; min-height: 0; display: flex; }
.preview { position: relative; flex: 1; min-width: 0; overflow: hidden; padding-left: 12px; color: #444; }
.preview h2 { font-size: 14px; line-height: 20px; color: #222; margin-bottom: 3px; }
dl { display: grid; grid-template-columns: 97px 1fr; line-height: 17px; margin-bottom: 7px; font-family: var(--pane); }
dd a, td a { color: #000080; }
dd { font-family: var(--grid); }
.lines { width: 100%; }
.lines td, .latest td { height: 19px; padding-bottom: 2px; color: #444; }
.lines th { height: 18px; }
.lines td.n, .lines th.n { padding-right: 6px; }
.lines .net { padding-left: 7px; padding-right: 0; border-right: 0; }
.lines td.amount { padding-right: 1px; }
.callout { position: absolute; left: 295px; top: 14px; height: 27px; padding: 0 8px 0 9px; font: 16px/25px "Liberation Sans", Arial, sans-serif; color: #000; background: #fff; border: 1px solid #1f497d; box-shadow: 4px 4px 4px #888; }

.vsplit { width: 8px; flex: none; background: repeating-linear-gradient(#999 0 2px, transparent 2px 5px) 2px 258px / 2px 17px no-repeat; border-left: 1px solid #b9d4ea; }
.facts { width: 316px; flex: none; }
.facts section { padding: 0 6px 0 8px; border-bottom: 1px solid #b9cbe0; }
.facts header { display: flex; align-items: center; height: 25px; padding-top: 2px; gap: 11px; }
.facts h3 { font: bold 11px/16px var(--grid); color: #555; margin-right: auto; }
.facts .chev { width: 10px; height: 6px; }
.latest { width: 100%; background: #fff; margin-bottom: 1px; }
.latest .n { padding-right: 6px; }
.latest .state { padding-left: 3px; }
.latest .dots td { text-align: left; padding-left: 3px; height: 22px; color: #000; }
.rel { display: block; height: 27px; padding: 3px 4px; color: #0066cc; font-family: var(--grid); }
.rel:last-child { height: 22px; }

.status { display: flex; align-items: center; height: 28px; flex: none; padding-top: 3px; font-family: var(--pane); color: #333; background: linear-gradient(#dbe3ec, #e6ecf3); }
.status .cell { display: flex; align-items: center; height: 20px; padding: 0 9px; border-left: 1px solid #1d4a85; }
.status .cell:first-child { padding-left: 10px; border-left: 0; border-right: 1px solid #1d4a85; }
.status .msg { margin: 0 auto 0 6px; }
</style>
